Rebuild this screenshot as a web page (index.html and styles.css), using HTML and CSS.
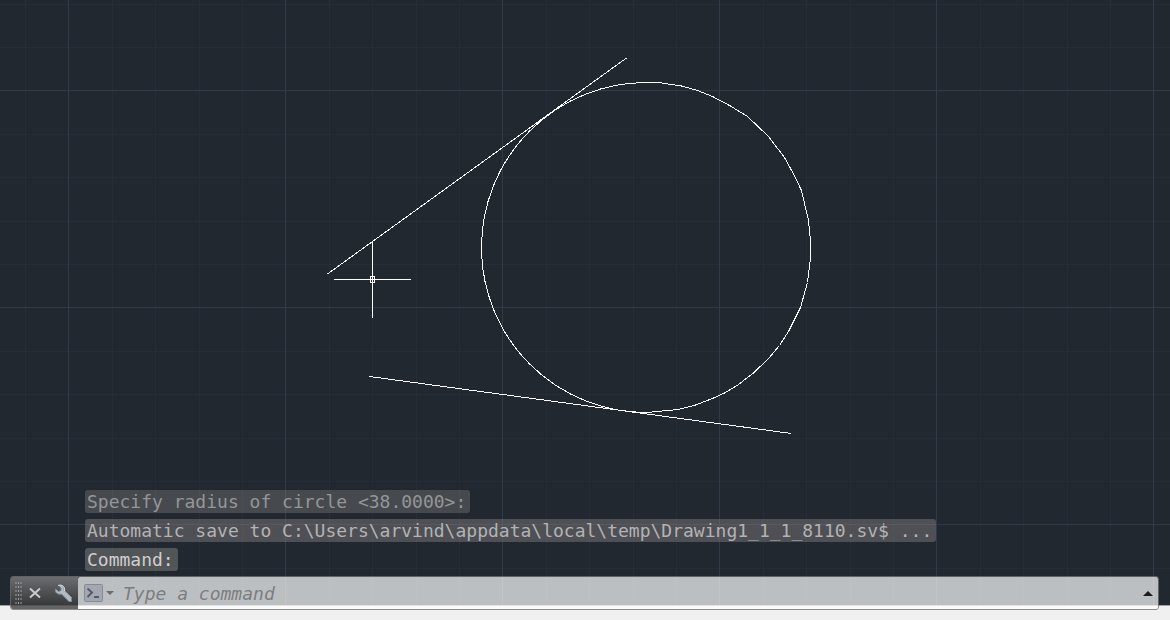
FILE: index.html
```html
<!DOCTYPE html>
<html lang="en">
  <head>
    <meta charset="UTF-8" />
    <title>Drawing1</title>
    <link rel="stylesheet" href="styles.css" />
  </head>
  <body>
    <main class="workspace">
      <svg class="drawing" aria-label="Circle with two tangent lines">
        <defs>
          <pattern id="grid" x="68" y="90" width="217" height="217" patternUnits="userSpaceOnUse">
            <path class="grid-minor" d="M44.5 0V217M87.5 0V217M131.5 0V217M174.5 0V217M0 44.5H217M0 87.5H217M0 131.5H217M0 174.5H217" />
            <path class="grid-major" d="M.5 0V217M0 .5H217" />
          </pattern>
        </defs>
        <rect width="100%" height="100%" fill="url(#grid)" />

        <g class="shape">
          <!-- circle: left half smooth, right half as display segments -->
          <path d="M646.500 412.500A165 165 0 0 1 481.500 247.500A165 165 0 0 1 646.500 82.500L658.500 82.500L681.500 86L697.500 90.500L712.500 96.500L730.500 106L747.500 116.500L768.500 136.500L784.500 157.500L793.500 174L801.500 190.500L808.500 220.500L810.500 241.500L810.500 257.500L807.500 282.500L800.500 307.500L788.500 331.500L779.500 345.500L768.500 358.500L754 372.500L738.500 384.500L725.500 392.500L712.500 398.500L695.500 405L678.500 409.500Z" />
          <path d="M327.500 274L626.500 58" />
          <path d="M369.500 376.500L791.500 433.500" />
        </g>

        <!-- crosshair -->
        <g class="shape">
          <path d="M334 279.500H411M372.500 241V318" />
          <rect x="370.500" y="276.500" width="4" height="6" />
        </g>
      </svg>

      <section class="command-window">
        <div class="history">
          <p class="entry oldest">Specify radius of circle &lt;38.0000&gt;:</p>
          <p class="entry older">Automatic save to C:\Users\arvind\appdata\local\temp\Drawing1_1_1_8110.sv$ ...</p>
          <p class="entry">Command:</p>
        </div>

        <form class="command-bar" action="#">
          <div class="tools">
            <svg class="grip" width="7" height="22" aria-hidden="true">
              <path d="M1 0V22M3.500 0V22M6 0V22" />
            </svg>
            <button type="button" class="close" aria-label="Close">
              <svg width="12" height="12" viewBox="0 0 12 12">
                <path d="M1 1.500L11 10.500M11 1.500L1 10.500" />
              </svg>
            </button>
            <button type="button" class="customize" aria-label="Customize">
              <svg width="19" height="19" viewBox="0 0 19 19">
                <path class="wrench" d="M4.500 1.500C8 .5 11 3 10 7L17.500 14.500V17.500H15L7.500 10C4 11 .5 8.500 1.500 5L4.500 7.500L7 6.500V4Z" />
                <path class="wrench-edge" d="M4 1.500C8 0 11.500 3 10.500 7L17.500 14" />
              </svg>
            </button>
          </div>
          <div class="prompt">
            <button type="button" class="recent" aria-label="Recent commands">
              <svg width="30" height="18" viewBox="0 0 30 18">
                <rect class="icon-frame" x=".5" y=".5" width="18" height="17" rx="1" />
                <path class="icon-prompt" d="M3.500 4.500L8 8.500L3.500 13M10 13H15" />
                <path class="icon-arrow" d="M22 7H30L26 11Z" />
              </svg>
            </button>
            <input type="text" class="command-input" placeholder="Type a command" aria-label="Command" />
            <button type="button" class="expand" aria-label="Show history">
              <svg width="10" height="5" viewBox="0 0 10 5">
                <path d="M0 5L5 0L10 5Z" />
              </svg>
            </button>
          </div>
        </form>
      </section>
    </main>
    <footer class="status"></footer>
  </body>
</html>
```

FILE: styles.css
```css
* {
  box-sizing: border-box;
}

body {
  margin: 0;
  height: 100vh;
  display: flex;
  flex-direction: column;
  font-family: "DejaVu Sans Mono", monospace;
  font-size: 18px;
  background-color: #f0f0f0;
}

.workspace {
  position: relative;
  flex: 1;
  min-height: 0;
  background-color: #212830;
  border-bottom: 1px solid #a0a0a0;
}

.status {
  height: 14px;
}

/* Drawing */

.drawing {
  display: block;
  width: 100%;
  height: 100%;
}

.grid-minor,
.grid-major {
  fill: none;
  stroke: #262d37;
  shape-rendering: crispEdges;
}

.grid-major {
  stroke: #343a4a;
}

.shape {
  fill: none;
  stroke: #fff;
  shape-rendering: crispEdges;
}

/* Command window, floats over the drawing */

.command-window {
  position: absolute;
  left: 10px;
  right: 11px;
  bottom: -5px;
}

.history {
  display: flex;
  flex-direction: column;
  align-items: flex-start;
  gap: 6px;
  margin: 0 0 5px 75px;
}

.entry {
  margin: 0;
  padding: 0 4px 0 2px;
  height: 23px;
  line-height: 23px;
  white-space: nowrap;
  color: #cfcfcf;
  background-color: rgba(128, 126, 125, 0.52);
  border-radius: 3px;
}

.older {
  color: #b2b3b4;
  background-color: rgba(128, 126, 125, 0.48);
}

.oldest {
  color: #949697;
  background-color: rgba(128, 126, 125, 0.4);
}

.command-bar {
  display: flex;
  height: 34px;
  border: 1px solid rgba(112, 112, 112, 0.8);
  border-radius: 3px;
  overflow: hidden;
}

.command-bar button {
  display: flex;
  padding: 0;
  border: none;
  background: none;
  cursor: pointer;
}

.tools {
  display: flex;
  align-items: center;
  width: 67px;
  padding-left: 4px;
  background-image: linear-gradient(
    rgba(116, 116, 116, 0.9),
    rgba(52, 52, 52, 0.75)
  );
}

.grip path {
  stroke: #a0a0a0;
  stroke-dasharray: 2 2;
}

.close {
  margin-left: 7px;
}

.close path {
  fill: none;
  stroke: #cacaca;
  stroke-width: 2;
}

.customize {
  margin-left: 13px;
}

.wrench {
  fill: #b4bac1;
  stroke: #7f8893;
}

.wrench-edge {
  fill: none;
  stroke: #dde0e3;
}

.prompt {
  display: flex;
  flex: 1;
  align-items: center;
  gap: 9px;
  padding: 0 5px 0 6px;
  background-color: rgba(255, 255, 255, 0.7);
  border-radius: 2px 0 0 2px;
}

.icon-frame {
  fill: #a3a8b0;
  stroke: #858b94;
}

.icon-prompt {
  fill: none;
  stroke: #535a6b;
  stroke-width: 2;
}

.icon-arrow {
  fill: #6a6c6e;
}

.command-input {
  flex: 1;
  min-width: 0;
  height: 100%;
  padding: 0;
  border: none;
  outline: none;
  background: none;
  font: inherit;
  font-style: italic;
  color: #222;
}

.command-input::placeholder {
  color: #7c7d7f;
  opacity: 1;
}

.expand path {
  fill: #1c1c1c;
}
```
